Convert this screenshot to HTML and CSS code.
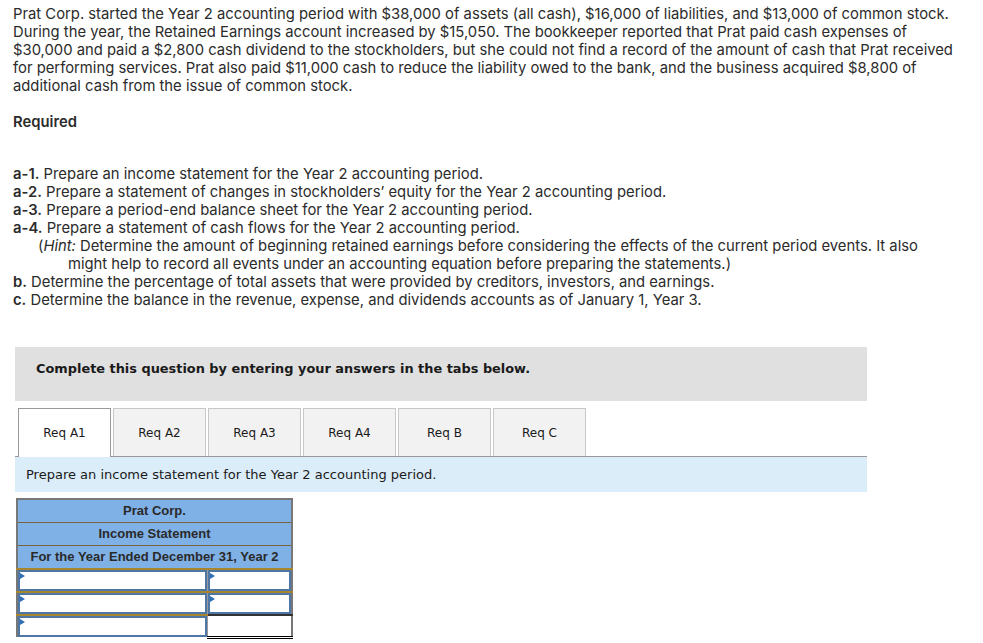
FILE: index.html
```html
<!DOCTYPE html>
<html>
<head>
<meta charset="utf-8">
<link rel="stylesheet" href="styles.css">
</head>
<body>
<div class="page">
  <p class="intro">Prat Corp. started the Year 2 accounting period with $38,000 of assets (all cash), $16,000 of liabilities, and $13,000 of common stock. During the year, the Retained Earnings account increased by $15,050. The bookkeeper reported that Prat paid cash expenses of $30,000 and paid a $2,800 cash dividend to the stockholders, but she could not find a record of the amount of cash that Prat received for performing services. Prat also paid $11,000 cash to reduce the liability owed to the bank, and the business acquired $8,800 of additional cash from the issue of common stock.</p>
  <p class="required">Required</p>
  <div class="reqs">
    <div><b>a-1.</b> Prepare an income statement for the Year 2 accounting period.</div>
    <div><b>a-2.</b> Prepare a statement of changes in stockholders’ equity for the Year 2 accounting period.</div>
    <div><b>a-3.</b> Prepare a period-end balance sheet for the Year 2 accounting period.</div>
    <div><b>a-4.</b> Prepare a statement of cash flows for the Year 2 accounting period.</div>
    <div class="hint">(<i>Hint:</i> Determine the amount of beginning retained earnings before considering the effects of the current period events. It also</div>
    <div class="hint2">might help to record all events under an accounting equation before preparing the statements.)</div>
    <div><b>b.</b> Determine the percentage of total assets that were provided by creditors, investors, and earnings.</div>
    <div><b>c.</b> Determine the balance in the revenue, expense, and dividends accounts as of January 1, Year 3.</div>
  </div>

  <div class="complete">Complete this question by entering your answers in the tabs below.</div>

  <div class="tabs">
    <div class="tab active">Req A1</div>
    <div class="tab">Req A2</div>
    <div class="tab">Req A3</div>
    <div class="tab">Req A4</div>
    <div class="tab">Req B</div>
    <div class="tab">Req C</div>
  </div>
  <div class="instr">Prepare an income statement for the Year 2 accounting period.</div>

  <table class="stmt">
    <tr><td class="hd" colspan="2">Prat Corp.</td></tr>
    <tr><td class="hd" colspan="2">Income Statement</td></tr>
    <tr><td class="hd" colspan="2">For the Year Ended December 31, Year 2</td></tr>
    <tr>
      <td class="lc"><div class="inp"><span class="tri"></span></div></td>
      <td class="rc"><div class="inp"><span class="tri"></span></div></td>
    </tr>
    <tr>
      <td class="lc"><div class="inp"><span class="tri"></span></div></td>
      <td class="rc"><div class="inp"><span class="tri"></span></div></td>
    </tr>
    <tr>
      <td class="lc"><div class="inp"><span class="tri"></span></div></td>
      <td class="rc total"></td>
    </tr>
  </table>
</div>
</body>
</html>
```

FILE: styles.css
```css
html, body {
  margin: 0;
  padding: 0;
  background: #ffffff;
}

.page {
  padding: 5px 0 0 13px;
  font-family: Inter, "Open Sans", sans-serif;
  font-size: 14.8px;
  line-height: 18px;
  color: #2b2b2b;
}

.intro {
  margin: 0;
  width: 952px;
}

.required {
  margin: 18px 0 0 0;
  font-weight: 600;
}

.reqs {
  margin-top: 34px;
}

.reqs b {
  font-weight: 600;
}

.hint {
  padding-left: 25px;
}

.hint2 {
  padding-left: 55px;
}

.complete {
  margin: 38px 0 0 2px;
  width: 852px;
  height: 54px;
  box-sizing: border-box;
  background: #e0e0e0;
  padding: 13px 0 0 21px;
  font-family: "DejaVu Sans", Verdana, sans-serif;
  font-weight: bold;
  font-size: 12.9px;
  line-height: 18px;
  color: #1a1a1a;
}

.tabs {
  display: flex;
  gap: 2px;
  margin: 7px 0 0 5px;
  height: 48px;
  position: relative;
  z-index: 1;
}

.tab {
  width: 93px;
  height: 48px;
  box-sizing: border-box;
  background: #f2f2f2;
  border: 1px solid #c8c8c8;
  border-bottom: none;
  display: flex;
  align-items: center;
  justify-content: center;
  font-family: "DejaVu Sans", Verdana, sans-serif;
  font-size: 12px;
  color: #1a1a1a;
}

.tab.active {
  background: #ffffff;
  border-color: #9a9a9a;
  height: 49px;
}

.instr {
  margin-left: 2px;
  width: 852px;
  height: 36px;
  box-sizing: border-box;
  background: #dbedf9;
  border-top: 1px solid #999999;
  padding: 9px 0 0 11px;
  font-family: "DejaVu Sans", Verdana, sans-serif;
  font-size: 13px;
  line-height: 18px;
  color: #1a1a1a;
}

.stmt {
  margin: 6px 0 0 3px;
  border-collapse: collapse;
  border: 2px solid #777777;
  border-bottom: none;
  width: 277px;
  font-family: "Liberation Sans", Arial, sans-serif;
  font-size: 13px;
  font-weight: bold;
  color: #2a2a2a;
}

.stmt td {
  padding: 0;
}

.hd {
  background: #7fb1e6;
  height: 22px;
  text-align: center;
  border-bottom: 1px solid #7a6440;
}

.lc, .rc {
  border-top: 2px solid #a8862e;
  background: #ffffff;
}

.lc {
  width: 191px;
  border-right: 1px solid #9a9a9a;
}

.rc {
  width: 84px;
}

.inp {
  position: relative;
  height: 17px;
  border: 2px solid #4f77a6;
  background: #ffffff;
}

.tri {
  position: absolute;
  left: 0;
  top: 1px;
  width: 0;
  height: 0;
  border-top: 3px solid transparent;
  border-bottom: 3px solid transparent;
  border-left: 5px solid #2f6fb8;
}

.rc.total {
  border-top: 2px solid #333333;
  border-bottom: 3px double #000000;
  height: 18px;
}
```
